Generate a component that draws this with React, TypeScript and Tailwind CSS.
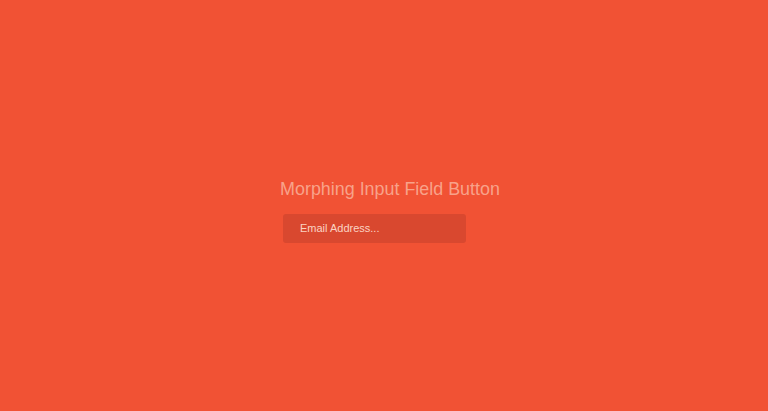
export default function App() {
  return (
    <div className="min-h-[411px] w-full bg-[#f15234] flex justify-center pl-[12px] pt-[177px]">
      <div className="w-[220px] flex flex-col">
        <h1 className="text-center whitespace-nowrap text-[17.9px] leading-[24px] text-[#f8a28a] font-['Liberation_Sans',sans-serif]">
          Morphing Input Field Button
        </h1>
        <div className="mt-[13px] ml-[3px] w-[183px] h-[29px] rounded-[3px] bg-[#d9482f] flex items-center pl-[17px]">
          <input
            type="text"
            autoFocus
            placeholder="Email Address..."
            className="w-full bg-transparent outline-none text-[11px] text-[#fbd3c3] caret-[#fbd3c3] placeholder:text-[#fbd3c3] font-['Liberation_Sans',sans-serif]"
          />
        </div>
      </div>
    </div>
  )
}
